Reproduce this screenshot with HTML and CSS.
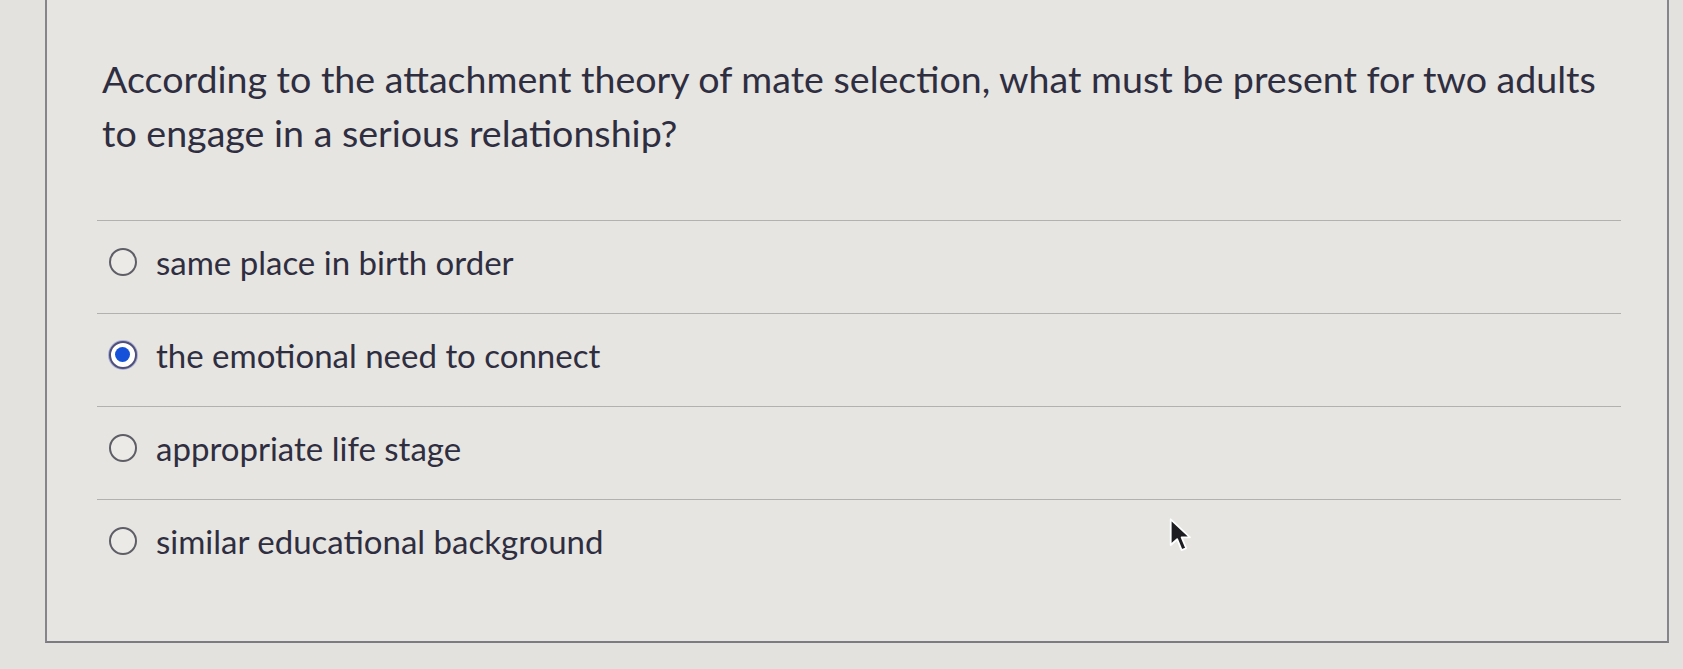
FILE: index.html
```html
<!DOCTYPE html>
<html lang="en">
<head>
<meta charset="utf-8">
<title>Question</title>
<link rel="stylesheet" href="styles.css">
</head>
<body>
<div class="frame">
  <p class="question">According to the attachment theory of mate selection, what must be present for two adults to engage in a serious relationship?</p>
  <ul class="options">
    <li class="option"><span class="radio"></span><span class="label">same place in birth order</span></li>
    <li class="option"><span class="radio selected"></span><span class="label">the emotional need to connect</span></li>
    <li class="option"><span class="radio"></span><span class="label">appropriate life stage</span></li>
    <li class="option last"><span class="radio"></span><span class="label">similar educational background</span></li>
  </ul>
  <svg class="cursor" width="26" height="36" viewBox="0 0 20 28" aria-hidden="true">
    <path d="M2 1 L2 21 L7 16.5 L10.5 25 L14 23.5 L10.5 15 L17 15 Z" fill="#1e1e22" stroke="#ffffff" stroke-width="1.4" stroke-linejoin="round"/>
  </svg>
</div>
</body>
</html>
```

FILE: styles.css
```css
html, body {
  margin: 0;
  padding: 0;
}

body {
  background: #e3e2de;
  font-family: Lato, "Open Sans", sans-serif;
  color: #2f2e40;
  width: 1683px;
  height: 669px;
  overflow: hidden;
}

.frame {
  position: relative;
  box-sizing: border-box;
  margin-left: 45px;
  width: 1624px;
  height: 643px;
  border-left: 2px solid #86858b;
  border-right: 2px solid #86858b;
  border-bottom: 2px solid #7c7b81;
  background: #e6e5e1;
}

.question {
  margin: 0;
  padding: 52px 0 0 55px;
  width: 1520px;
  font-size: 37.6px;
  line-height: 54px;
  font-weight: 400;
}

.options {
  list-style: none;
  margin: 60px 0 0 50px;
  padding: 0;
  width: 1524px;
  border-top: 1px solid #b2b1af;
}

.option {
  display: flex;
  align-items: center;
  height: 82px;
  padding-bottom: 10px;
  border-bottom: 1px solid #b2b1af;
}

.option.last {
  border-bottom: none;
}

.radio {
  box-sizing: border-box;
  flex: none;
  width: 28px;
  height: 28px;
  margin-left: 12px;
  border: 2px solid #5f5e66;
  border-radius: 50%;
  background: #ebeae7;
}

.radio.selected {
  border: 2.5px solid #4f4f78;
  background: #ffffff;
  position: relative;
  box-shadow: 0 0 0 1px #a9b1d8;
}

.radio.selected::after {
  content: "";
  position: absolute;
  left: 4px;
  top: 4px;
  width: 15px;
  height: 15px;
  border-radius: 50%;
  background: #1552d9;
}

.label {
  margin-left: 19px;
  font-size: 33px;
  line-height: 40px;
}

.cursor {
  position: absolute;
  left: 1121px;
  top: 518px;
}
```
